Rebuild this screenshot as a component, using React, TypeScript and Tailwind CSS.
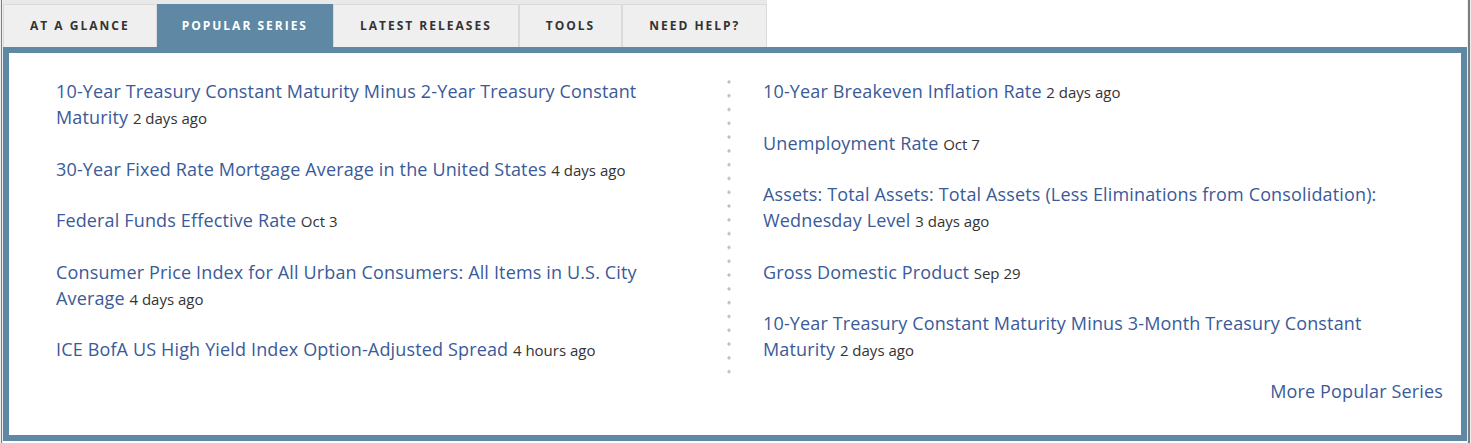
import React from "react";

type Item = { title: string; when: string };

const left: Item[] = [
  { title: "10-Year Treasury Constant Maturity Minus 2-Year Treasury Constant Maturity", when: "2 days ago" },
  { title: "30-Year Fixed Rate Mortgage Average in the United States", when: "4 days ago" },
  { title: "Federal Funds Effective Rate", when: "Oct 3" },
  { title: "Consumer Price Index for All Urban Consumers: All Items in U.S. City Average", when: "4 days ago" },
  { title: "ICE BofA US High Yield Index Option-Adjusted Spread", when: "4 hours ago" },
];

const right: Item[] = [
  { title: "10-Year Breakeven Inflation Rate", when: "2 days ago" },
  { title: "Unemployment Rate", when: "Oct 7" },
  { title: "Assets: Total Assets: Total Assets (Less Eliminations from Consolidation): Wednesday Level", when: "3 days ago" },
  { title: "Gross Domestic Product", when: "Sep 29" },
  { title: "10-Year Treasury Constant Maturity Minus 3-Month Treasury Constant Maturity", when: "2 days ago" },
];

const tabs = ["At a Glance", "Popular Series", "Latest Releases", "Tools", "Need Help?"];

function SeriesList({ items }: { items: Item[] }) {
  return (
    <ul>
      {items.map((it, i) => (
        <li key={i} className={`text-[18px] leading-[26px] ${i === items.length - 1 ? "mb-4" : "mb-[25.5px]"}`}>
          <a href="#" className="tracking-[0.15px] text-[#3a5a99]">{it.title}</a>{" "}
          <span className="text-[15px] leading-none text-[#333]">{it.when}</span>
        </li>
      ))}
    </ul>
  );
}

export default function App() {
  return (
    <div className="w-[1471px] h-[443px] bg-[#eeeeee] pl-px pr-px font-['Open_Sans',sans-serif]">
      <div className="h-full border-l border-r-2 border-[#7d7d7d] pl-px pr-px">
        <div className="h-full bg-white">
          <div className="inline-flex bg-[#e9e9e9] pt-[4px]">
            {tabs.map((t, i) => (
              <div
                key={t}
                className={
                  i === 1
                    ? "h-[43px] px-[25px] flex items-center bg-[#5e88a3] text-white text-[12px] font-bold uppercase tracking-[2px]"
                    : "h-[43px] px-[26px] flex items-center bg-[#efefef] border border-b-0 border-[#dadada] text-[#333] text-[12px] font-bold uppercase tracking-[2px]"
                }
              >
                {t}
              </div>
            ))}
          </div>
          <div className="border-[6px] border-[#5e88a3] bg-white h-[394px] pl-[47px] pr-[18px] pt-[25px]">
            <div className="flex">
              <div className="w-[670px] pr-[25px]">
                <SeriesList items={left} />
              </div>
              <div className="w-[6px] -mt-[3px] bg-[radial-gradient(circle,#bdbdbd_1.3px,transparent_1.9px)] bg-[length:6px_13.8px]" />
              <div className="flex-1 pl-[31px] pr-[10px]">
                <SeriesList items={right} />
              </div>
            </div>
            <div className="text-right text-[18px] leading-[26px]">
              <a href="#" className="tracking-[0.15px] text-[#3a5a99]">More Popular Series</a>
            </div>
          </div>
        </div>
      </div>
    </div>
  );
}
